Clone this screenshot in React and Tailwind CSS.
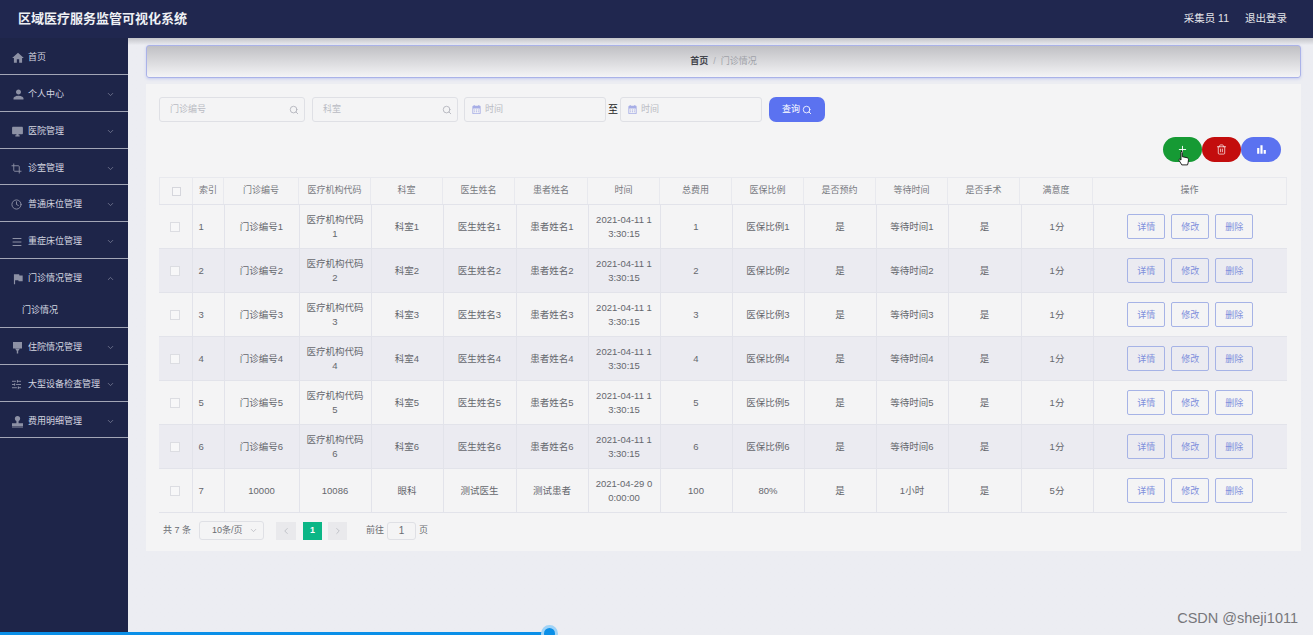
import { ChevronDown, ChevronUp, ChevronLeft, ChevronRight, Clock, Crop, Menu, Plus, Search, SlidersHorizontal, Trash2 } from "lucide-react";
import { MdBarChart, MdCalendarMonth, MdDesktopWindows, MdFlag, MdHome, MdPerson } from "react-icons/md";

const FONT = "font-['Liberation_Sans','Noto_Sans_CJK_SC',sans-serif]";

const PinIcon = () => (
  <svg width="13" height="13" viewBox="0 0 13 13" fill="#8d91a5">
    <path d="M2 1h9v6.5H2z" />
    <path d="M4 7.5h5L7.2 10v2.5H5.8V10z" />
  </svg>
);

const StampIcon = () => (
  <svg width="13" height="13" viewBox="0 0 13 13" fill="#8d91a5">
    <circle cx="6.5" cy="3.6" r="2.6" />
    <path d="M5.4 5.5h2.2v2.7H12V11H1V8.2h4.4z" />
    <path d="M1 11.500h11v1H1z" />
  </svg>
);

const menu = [
  { label: "首页", icon: <MdHome size={14} color="#8d91a5" />, h: "h-[37px]", noArrow: true },
  { label: "个人中心", icon: <MdPerson size={15} color="#8d91a5" />, h: "h-[37px]" },
  { label: "医院管理", icon: <MdDesktopWindows size={13} color="#8d91a5" />, h: "h-[37px]" },
  { label: "诊室管理", icon: <Crop size={11} color="#8d91a5" />, h: "h-[36px]" },
  { label: "普通床位管理", icon: <Clock size={11} color="#8d91a5" />, h: "h-[37px]" },
  { label: "重症床位管理", icon: <Menu size={12} color="#8d91a5" />, h: "h-[37px]" },
  { label: "门诊情况管理", icon: <MdFlag size={14} color="#8d91a5" />, h: "h-[69px]", open: true },
  { label: "住院情况管理", icon: <PinIcon />, h: "h-[37px]" },
  { label: "大型设备检查管理", icon: <SlidersHorizontal size={11} color="#8d91a5" />, h: "h-[37px]" },
  { label: "费用明细管理", icon: <StampIcon />, h: "h-[36px]" },
];

const headers = ["索引", "门诊编号", "医疗机构代码", "科室", "医生姓名", "患者姓名", "时间", "总费用", "医保比例", "是否预约", "等待时间", "是否手术", "满意度", "操作"];
const headWidths = [33, 31, 75, 72, 72, 72, 73, 72, 72, 72, 72, 72, 72, 73, 194];
const bodyWidths = [33, 32, 75, 72, 72, 73, 72, 72, 72, 72, 72, 72, 73, 72, 194];

const rows = [1, 2, 3, 4, 5, 6].map((n) => [
  n, `门诊编号${n}`, `医疗机构代码${n}`, `科室${n}`, `医生姓名${n}`, `患者姓名${n}`, "2021-04-11 13:30:15", n, `医保比例${n}`, "是", `等待时间${n}`, "是", "1分",
]);
rows.push([7, "10000", "10086", "眼科", "测试医生", "测试患者", "2021-04-29 00:00:00", 100, "80%", "是", "1小时", "是", "5分"]);

function SideItem({ item }) {
  return (
    <div className={`${item.h} border-b border-[#a3a6b6] shrink-0`}>
      <div className="h-[36px] flex items-center pl-[11px] pr-[13px] pt-[3px]">
        <span className="w-[17px] flex justify-start">{item.icon}</span>
        <span className="text-[9px] text-[#d5d7e0] flex-1 whitespace-nowrap">{item.label}</span>
        {!item.noArrow && (item.open
          ? <ChevronUp size={9} color="#7d8299" />
          : <ChevronDown size={9} color="#7d8299" />)}
      </div>
      {item.open && (
        <div className="h-[32px] pl-[22px] flex items-center text-[9px] text-[#d5d7e0]">门诊情况</div>
      )}
    </div>
  );
}

function InputBox({ label, width, left, right }) {
  return (
    <div className={`${width} h-[25px] border border-[#dfe0e5] rounded-[3px] flex items-center px-[10px] text-[9px] text-[#b9bbc3]`}>
      {left}
      <span className="flex-1">{label}</span>
      {right}
    </div>
  );
}

const Cal = () => <MdCalendarMonth size={11} color="#a7aee6" className="mr-[3px] -ml-[4px]" />;
const Glass = () => <Search size={10} color="#aeb0b8" className="-mr-[5px]" />;

export default function App() {
  return (
    <div className={`${FONT} w-[1313px] h-[635px] overflow-hidden relative flex flex-col bg-[#ecedf2]`}>
      <header className="h-[38px] shrink-0 bg-[#20274f] flex items-center justify-between pl-[18px] pr-[26px]">
        <h1 className="text-[13px] font-bold text-[#eef0f4]">区域医疗服务监管可视化系统</h1>
        <div className="flex gap-[16px] text-[10.5px] text-[#e4e5ea]">
          <span>采集员 11</span>
          <span>退出登录</span>
        </div>
      </header>

      <div className="flex flex-1 min-h-0">
        <aside className="w-[128px] shrink-0 bg-[#1e2549] flex flex-col">
          {menu.map((item) => <SideItem key={item.label} item={item} />)}
        </aside>

        <main className="flex-1 pl-[18px] pr-[12px] pt-[7px] bg-gradient-to-b from-[#c3c4c9] via-[#ecedf2] via-[1.2%] to-[#ecedf2]">
          <div className="h-[33px] rounded-[3px] border border-[#aab2e8] shadow-[0_1px_3px_#c5cbf0] bg-gradient-to-b from-[#c0c0c4] to-[#f4f4f6] flex items-center justify-center text-[9px] gap-[5px]">
            <span className="text-[#44464d] font-bold">首页</span>
            <span className="text-[#a8aab0]">/</span>
            <span className="text-[#a0a2a8]">门诊情况</span>
          </div>

          <section className="mt-[6px] h-[467px] bg-[#f4f4f5] px-[13px] pt-[13px]">
            <div className="flex items-center">
              <InputBox label="门诊编号" width="w-[146px]" right={<Glass />} />
              <div className="w-[7px]" />
              <InputBox label="科室" width="w-[146px]" right={<Glass />} />
              <div className="w-[6px]" />
              <InputBox label="时间" width="w-[142px]" left={<Cal />} />
              <span className="w-[14px] text-center text-[10px] text-[#222]">至</span>
              <InputBox label="时间" width="w-[142px]" left={<Cal />} />
              <button className="ml-[7px] w-[56px] h-[25px] rounded-[7px] bg-[#5b72f0] text-white text-[9px] flex items-center justify-center gap-[2px]">
                查询 <Search size={10} />
              </button>
            </div>

            <div className="mt-[15px] h-[25px] flex justify-end pr-[7px]">
              <button className="w-[39px] rounded-full bg-[#169a34] flex items-center justify-center"><Plus size={11} color="#fff" /></button>
              <button className="w-[39px] rounded-full bg-[#c30d0d] flex items-center justify-center"><Trash2 size={11} color="#fff" strokeWidth={1.5} /></button>
              <button className="w-[40px] rounded-full bg-[#5b72f0] flex items-center justify-center"><MdBarChart size={13} color="#fff" /></button>
            </div>

            <table className="mt-[15px] table-fixed border-collapse w-[1127px] text-[9px] text-[#77797f]">
              <colgroup>{headWidths.map((w, i) => <col key={i} style={{ width: w }} />)}</colgroup>
              <thead>
                <tr className="h-[27px]">
                  <th className="border border-[#e8e9ee] font-normal">
                    <span className="block mx-auto w-[9px] h-[9px] border border-[#d5d6dc] bg-[#f7f7f8]" />
                  </th>
                  {headers.map((h) => <th key={h} className="border border-[#e8e9ee] font-normal">{h}</th>)}
                </tr>
              </thead>
            </table>
            <table className="-mt-px table-fixed border-collapse w-[1128px] text-[9.5px] leading-[14px] text-[#65676d]">
              <colgroup>{bodyWidths.map((w, i) => <col key={i} style={{ width: w }} />)}</colgroup>
              <tbody>
                {rows.map((row, i) => (
                  <tr key={i} className={`h-[44px] ${i % 2 ? "bg-[#ebebf1]" : "bg-[#f4f4f5]"}`}>
                    <td className="border-y border-r border-[#e2e3ea]">
                      <span className="block mx-auto w-[10px] h-[10px] border border-[#dcdde2] bg-[#f7f7f8]" />
                    </td>
                    {row.map((c, j) => (
                      <td key={j} className={`border border-[#e2e3ea] break-all ${j === 0 ? "text-left pl-[6px]" : "text-center px-[6px]"}`}>{c}</td>
                    ))}
                    <td className="border-y border-l border-[#e2e3ea]">
                      <div className="flex justify-center gap-[6px] text-[9px]">
                        {["详情", "修改", "删除"].map((t) => (
                          <button key={t} className="w-[38px] h-[25px] border border-[#a6b3e6] rounded-[2px] text-[#7f8fdc]">{t}</button>
                        ))}
                      </div>
                    </td>
                  </tr>
                ))}
              </tbody>
            </table>

            <div className="mt-[8px] h-[19px] flex items-center text-[9px] text-[#6a6c72] pl-[4px]">
              <span className="w-[36px]">共 7 条</span>
              <div className="w-[65px] h-[19px] border border-[#dfe0e5] rounded-[3px] flex items-center pl-[12px] pr-[5px] justify-between">
                10条/页 <ChevronDown size={9} color="#b5b7be" />
              </div>
              <span className="ml-[12px] w-[20px] h-[18px] bg-[#e9e9ec] flex items-center justify-center"><ChevronLeft size={10} color="#b8bac0" /></span>
              <span className="ml-[7px] w-[19px] h-[18px] bg-[#0bb686] text-white font-bold flex items-center justify-center">1</span>
              <span className="ml-[6px] w-[19px] h-[18px] bg-[#e9e9ec] flex items-center justify-center"><ChevronRight size={10} color="#b8bac0" /></span>
              <span className="ml-[19px]">前往</span>
              <span className="ml-[3px] w-[29px] h-[18px] border border-[#dfe0e5] rounded-[3px] flex items-center justify-center text-[10px]">1</span>
              <span className="ml-[3px]">页</span>
            </div>
          </section>
        </main>
      </div>

      {/* overlays from the screen recording */}
      <svg className="absolute left-[1178px] top-[150px]" width="12" height="16" viewBox="0 0 12 16">
        <path d="M3.2 1.2c.7 0 1.100.5 1.100 1.100v4.400l4.700 1c1 .2 1.600 1 1.500 2l-.4 3.200-.6 2H3.800L1 10.300c-.5-.7.3-1.500 1-1l1 .8V2.300c0-.6.5-1.100 1.200-1.100z" fill="#fff" stroke="#111" strokeWidth="0.9" />
      </svg>
      <div className="absolute left-0 bottom-0 w-[549px] h-[3px] bg-[#0a8fe8]" />
      <div className="absolute left-[541px] top-[625px] w-[17px] h-[17px] rounded-full bg-[#0a8fe8] border-[3px] border-[#9fd3f7]" />
      <span className="absolute right-[15px] top-[608px] text-[14.5px] text-[#77777b]">CSDN @sheji1011</span>
    </div>
  );
}
